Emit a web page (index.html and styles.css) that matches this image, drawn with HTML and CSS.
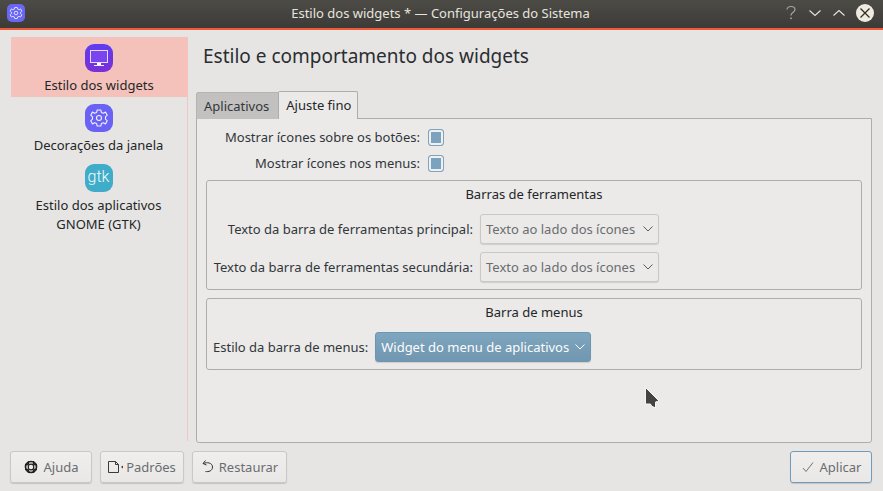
FILE: index.html
```html
<!DOCTYPE html>
<html lang="pt-BR">
<head>
<meta charset="utf-8">
<title>Estilo dos widgets</title>
<link rel="stylesheet" href="styles.css">
</head>
<body>
<div class="window">
  <header class="titlebar">
    <svg class="app-icon" width="18" height="18" viewBox="0 0 18 18"><rect width="18" height="18" rx="5" fill="#6a67f5"/><path d="M7.7 3.5h2.6l.4 1.6 1.4.6 1.4-.8 1.3 2.2-1.2 1.1v1.6l1.2 1.1-1.3 2.2-1.4-.8-1.4.6-.4 1.6H7.7l-.4-1.6-1.4-.6-1.4.8-1.3-2.2 1.2-1.1V8.2L3.2 7.1l1.3-2.2 1.4.8 1.4-.6z" fill="none" stroke="#e8e8ff" stroke-width=".9"/><circle cx="9" cy="9" r="1.8" fill="none" stroke="#e8e8ff" stroke-width=".9"/></svg>
    <div class="win-title">Estilo dos widgets * — Configurações do Sistema</div>
    <div class="win-controls">
      <svg width="14" height="16" viewBox="0 0 14 16"><path d="M3 4.500C3 2.500 5 1.500 7 1.500s4 1 4 3c0 1.800-1.500 2.500-2.500 3.200C7.500 8.400 7 9 7 10.500" fill="none" stroke="#a9a8a2" stroke-width="1.200"/><rect x="6.200" y="12.500" width="1.600" height="1.600" fill="#a9a8a2"/></svg>
      <svg width="14" height="14" viewBox="0 0 14 14"><path d="M1.5 4.5 7 9.5l5.500-5" fill="none" stroke="#e6e4df" stroke-width="1.100"/></svg>
      <svg width="14" height="14" viewBox="0 0 14 14"><path d="M1.500 9.500 7 4.500l5.500 5" fill="none" stroke="#e6e4df" stroke-width="1.100"/></svg>
      <svg width="18" height="18" viewBox="0 0 18 18"><circle cx="9" cy="9" r="9" fill="#efebe0"/><path d="M4.500 4.500l9 9m0-9-9 9" stroke="#2f2e2a" stroke-width="1.300"/></svg>
    </div>
  </header>
  <div class="main">
    <nav class="sidebar">
      <div class="nav-item selected">
        <svg class="nav-icon" width="28" height="28" viewBox="0 0 28 28"><defs><linearGradient id="pg" x1="0" y1="0" x2="0" y2="1"><stop offset="0" stop-color="#5e3df0"/><stop offset="1" stop-color="#7c2fd6"/></linearGradient></defs><rect width="28" height="28" rx="9" fill="url(#pg)"/><rect x="5.500" y="6.500" width="17" height="12" fill="#7a45ee" stroke="#e4dcff" stroke-width="1"/><rect x="12" y="19" width="4" height="2" fill="#fff"/><rect x="9" y="21" width="10" height="1" fill="#efeaff"/></svg>
        <span>Estilo dos widgets</span>
      </div>
      <div class="nav-item">
        <svg class="nav-icon" width="28" height="28" viewBox="0 0 28 28"><rect width="28" height="28" rx="9" fill="#6a62f4"/><path d="M12.200 6h3.600l.6 2.400 2 .9 2.100-1.200 1.800 3.100-1.800 1.700v2.200l1.800 1.700-1.800 3.100-2.100-1.200-2 .9-.6 2.400h-3.600l-.6-2.400-2-.9-2.100 1.200-1.800-3.100 1.800-1.700v-2.200l-1.800-1.700 1.800-3.100 2.100 1.200 2-.9z" fill="none" stroke="#f0efff" stroke-width="1.100" stroke-linejoin="round"/><circle cx="14" cy="14" r="2.500" fill="none" stroke="#f0efff" stroke-width="1.100"/></svg>
        <span>Decorações da janela</span>
      </div>
      <div class="nav-item">
        <span class="gtk-icon">gtk</span>
        <span>Estilo dos aplicativos<br>GNOME (GTK)</span>
      </div>
    </nav>
    <section class="content">
      <h1 class="page-title">Estilo e comportamento dos widgets</h1>
      <div class="tabs">
        <div class="tab">Aplicativos</div>
        <div class="tab active">Ajuste fino</div>
      </div>
      <div class="panel">
        <div class="check-row"><span>Mostrar ícones sobre os botões:</span><span class="checkbox"></span></div>
        <div class="check-row second"><span>Mostrar ícones nos menus:</span><span class="checkbox"></span></div>
        <fieldset class="group toolbars">
          <div class="group-title">Barras de ferramentas</div>
          <div class="form-row first"><span class="form-label">Texto da barra de ferramentas principal:</span>
            <div class="combo"><span>Texto ao lado dos ícones</span><svg width="10" height="6" viewBox="0 0 10 6"><path d="M.5.5 5 5 9.500.5" fill="none" stroke="#5a5c5e" stroke-width="1"/></svg></div></div>
          <div class="form-row"><span class="form-label">Texto da barra de ferramentas secundária:</span>
            <div class="combo"><span>Texto ao lado dos ícones</span><svg width="10" height="6" viewBox="0 0 10 6"><path d="M.5.5 5 5 9.500.5" fill="none" stroke="#5a5c5e" stroke-width="1"/></svg></div></div>
        </fieldset>
        <fieldset class="group menubar">
          <div class="group-title">Barra de menus</div>
          <div class="form-row first left"><span class="form-label">Estilo da barra de menus:</span>
            <div class="combo blue"><span>Widget do menu de aplicativos</span><svg width="10" height="6" viewBox="0 0 10 6"><path d="M.5.5 5 5 9.500.5" fill="none" stroke="#fff" stroke-width="1"/></svg></div></div>
        </fieldset>
      </div>
    </section>
  </div>
  <footer class="footer">
    <div class="btn ajuda"><svg width="14" height="14" viewBox="0 0 14 14"><circle cx="7" cy="7" r="5.500" fill="none" stroke="#1f1f1f" stroke-width="1.600"/><circle cx="7" cy="7" r="2.800" fill="#ecebe9" stroke="#1f1f1f" stroke-width="1.200"/><path d="M4.500 1v3.500M9.500 1v3.500M4.500 9.500V13M9.500 9.500V13M1 4.500h3.500M1 9.500h3.500M9.500 4.500H13M9.500 9.500H13" stroke="#1f1f1f" stroke-width="1.400"/></svg><span>Ajuda</span></div>
    <div class="btn padroes"><svg width="16" height="16" viewBox="0 0 16 16"><path d="M.5 2.500h7l3 3v8H.5z" fill="none" stroke="#3a3a3a"/><path d="M7.500 2.500v3h3" fill="none" stroke="#3a3a3a"/><path d="M15 6.500v3l-2-1.500z" fill="#3a3a3a"/></svg><span>Padrões</span></div>
    <div class="btn restaurar"><svg width="16" height="16" viewBox="0 0 16 16"><path d="M4.500 1.500 2 4.500 5.500 6" fill="none" stroke="#333"/><path d="M2.500 4.500c3-1.500 9-1 9 3.500 0 4-4 5-7 4.500" fill="none" stroke="#333"/></svg><span>Restaurar</span></div>
    <div class="btn aplicar"><svg width="14" height="14" viewBox="0 0 14 14"><path d="M2 8l3 3.500L12 2.500" fill="none" stroke="#666" stroke-width=".9"/></svg><span>Aplicar</span></div>
  </footer>
  <svg class="cursor" width="17" height="24" viewBox="0 0 17 24"><path d="M1.500 1.500 15 15l-3.500 1v6l-4-2-1-2-5 0z" fill="#434343" stroke="#f5f5f5" stroke-width="1" stroke-linejoin="round"/></svg>
</div>
</body>
</html>
```
FILE: styles.css
```css
* { box-sizing: border-box; }
html, body { margin: 0; padding: 0; }
body {
  width: 883px;
  height: 491px;
  overflow: hidden;
  font-family: "Noto Sans", sans-serif;
  font-size: 13px;
  color: #31363b;
  background: #e6e5e3;
}
.window {
  position: relative;
  width: 883px;
  height: 491px;
  display: flex;
  flex-direction: column;
}
.titlebar {
  height: 30px;
  flex: none;
  display: grid;
  grid-template-columns: 1fr auto 1fr;
  align-items: center;
  padding: 0 9px 2px 7px;
  background: linear-gradient(#4c4b46, #3c3b37);
  border-bottom: 2px solid #ee5a35;
  color: #e6e4df;
}
.win-title { text-align: center; }
.win-controls { display: flex; align-items: center; justify-content: flex-end; gap: 10px; }
.main { flex: 1; display: flex; padding: 7px 11px 8px 11px; min-height: 0; }
.sidebar {
  width: 177px;
  flex: none;
  border-right: 1px solid #eec9c4;
  margin-bottom: 2px;
}
.nav-item {
  height: 60px;
  padding: 7px 1px 0 0;
  display: flex;
  flex-direction: column;
  align-items: center;
  text-align: center;
  line-height: 19px;
  color: #232629;
}
.nav-item.selected { background: #f4c2bb; width: 177px; }
.nav-icon { display: block; margin-bottom: 4px; flex: none; }
.gtk-icon {
  width: 28px;
  height: 28px;
  flex: none;
  margin-bottom: 4px;
  border-radius: 9px;
  background: #3fadc9;
  color: #f2fbfd;
  font-family: Roboto, sans-serif;
  font-size: 16px;
  line-height: 25px;
  font-weight: 300;
}
.content { flex: 1; padding-left: 8px; min-width: 0; display: flex; flex-direction: column; }
.page-title {
  margin: 0 0 0 7px;
  height: 54px;
  padding-top: 6px;
  font-size: 19px;
  font-weight: 400;
  line-height: 27px;
  color: #2a2e32;
  flex: none;
}
.tabs { display: flex; height: 28px; flex: none; position: relative; z-index: 1; }
.tab {
  height: 27px;
  margin-top: 1px;
  padding: 0 9px 0 7px;
  line-height: 26px;
  background: #c2c1bf;
  border: 1px solid #b5b4b2;
  border-right: none;
  border-bottom: none;
  border-radius: 3px 0 0 0;
  color: #31363b;
}
.tab.active {
  height: 28px;
  margin-top: 0;
  padding: 0 6px 0 7px;
  background: #ebeae8;
  border: 1px solid #aeadab;
  border-bottom: none;
  border-radius: 2px 2px 0 0;
  line-height: 27px;
  color: #232629;
}
.panel {
  height: 325px;
  margin-top: -1px;
  background: #ebeae8;
  border: 1px solid #aeadab;
  border-radius: 0 0 3px 3px;
  padding: 9px 9px 0 9px;
}
.check-row {
  display: flex;
  justify-content: flex-end;
  align-items: center;
  gap: 8px;
  height: 18px;
  width: 238px;
  white-space: nowrap;
}
.check-row.second { margin-top: 8px; }
.checkbox {
  width: 16px;
  height: 17px;
  flex: none;
  border: 1px solid #7ea4bf;
  border-radius: 3px;
  background-color: #7ba3bf;
  box-shadow: inset 0 0 0 2px #f1f0ee;
}
.group {
  margin: 0;
  border: 1px solid #aeadab;
  border-radius: 3px;
  padding: 0 6px;
  width: 656px;
  min-width: 0;
}
.toolbars { margin-top: 8px; height: 110px; }
.menubar { margin-top: 8px; height: 72px; }
.group-title { text-align: center; line-height: 20px; padding-top: 3px; height: 23px; color: #232629; }
.form-row { display: flex; align-items: center; justify-content: flex-end; gap: 7px; width: 446px; margin-top: 8px; white-space: nowrap; }
.form-row.first { margin-top: 10px; }
.form-row.left { justify-content: flex-start; width: auto; }
.combo {
  width: 179px;
  height: 30px;
  flex: none;
  display: flex;
  align-items: center;
  justify-content: space-between;
  padding: 0 5px;
  background: #ebeae8;
  border: 1px solid #c9c8c6;
  border-radius: 3px;
  box-shadow: 0 1px 1px rgba(0,0,0,.12);
  color: #6a6d70;
}
.combo.blue {
  width: 216px;
  border-color: #6e96b2;
  background: linear-gradient(#7fa6bf, #7096b0);
  color: #fcfcfc;
}
.footer {
  height: 40px;
  flex: none;
  display: flex;
  padding: 0 11px 0 10px;
}
.btn {
  height: 32px;
  display: flex;
  align-items: center;
  justify-content: center;
  gap: 6px;
  background: linear-gradient(#efeeec, #e9e8e6);
  border: 1px solid #c9c8c6;
  border-radius: 3px;
  box-shadow: 0 1px 1px rgba(0,0,0,.15);
  color: #6a6d70;
}
.ajuda { width: 82px; }
.padroes { width: 84px; margin-left: 8px; gap: 2px; }
.restaurar { width: 95px; margin-left: 8px; gap: 2px; }
.aplicar { width: 82px; margin-left: auto; border-color: #6e9cbd; gap: 5px; }
.cursor { position: absolute; left: 644px; top: 386px; }
```
